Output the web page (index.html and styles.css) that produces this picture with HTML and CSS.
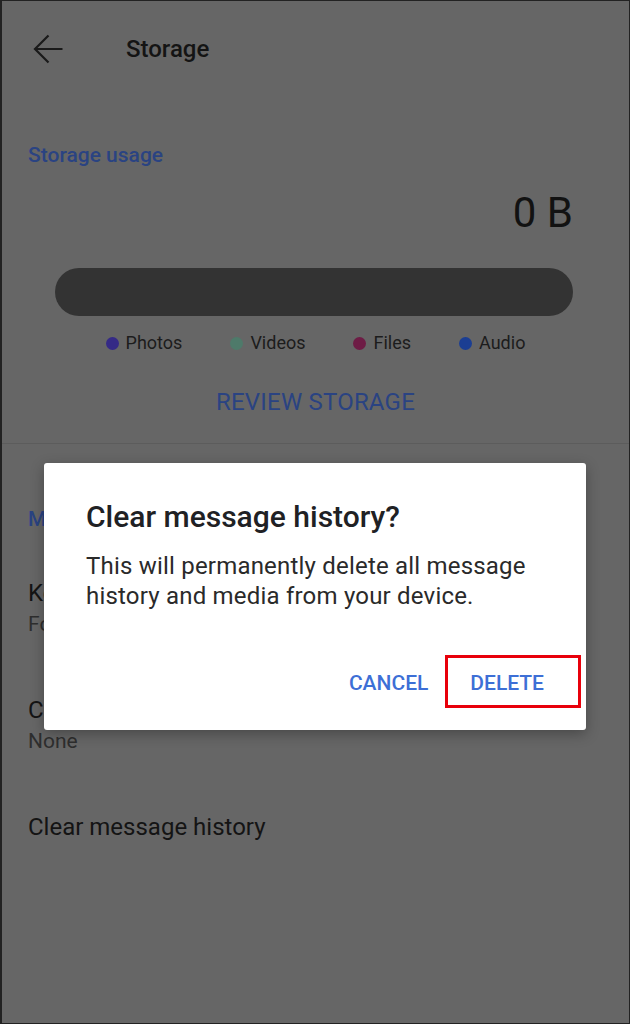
FILE: index.html
```html
<!DOCTYPE html>
<html lang="en">
<head>
    <meta charset="UTF-8">
    <meta name="viewport" content="width=device-width, initial-scale=1.0">
    <title>Storage</title>
    <link rel="stylesheet" href="styles.css">
</head>
<body>
    <div class="screen">
        <div class="toolbar">
            <svg class="back" width="30" height="30" viewBox="0 0 30 30">
                <path d="M29.5 15H2M15.5 1.5L2 15l13.5 13.5" fill="none" stroke="#1a1a1a" stroke-width="2.2"/>
            </svg>
            <div class="toolbar-title">Storage</div>
        </div>

        <div class="usage">
            <div class="section-title">Storage usage</div>
            <div class="total">0 B</div>
            <div class="bar"></div>
            <div class="legend">
                <div class="legend-item"><span class="dot photos"></span>Photos</div>
                <div class="legend-item"><span class="dot videos"></span>Videos</div>
                <div class="legend-item"><span class="dot files"></span>Files</div>
                <div class="legend-item"><span class="dot audio"></span>Audio</div>
            </div>
            <div class="review">REVIEW STORAGE</div>
        </div>

        <div class="messages">
            <div class="section-title">Messages</div>
            <div class="item">
                <div class="item-title">Keep messages</div>
                <div class="item-sub">Forever</div>
            </div>
            <div class="item">
                <div class="item-title">Conversation length limit</div>
                <div class="item-sub">None</div>
            </div>
            <div class="item">
                <div class="item-title">Clear message history</div>
            </div>
        </div>

        <div class="dialog">
            <div class="dialog-title">Clear message history?</div>
            <div class="dialog-text">This will permanently delete all message history and media from your device.</div>
            <div class="dialog-actions">
                <div class="btn">CANCEL</div>
                <div class="btn">DELETE</div>
            </div>
            <div class="highlight"></div>
        </div>
    </div>
</body>
</html>
```

FILE: styles.css
```css
body {
    margin: 0;
    padding: 0;
    font-family: Roboto, 'Noto Sans', sans-serif;
    background-color: #666666;
}

.screen {
    position: relative;
    box-sizing: border-box;
    width: 630px;
    height: 1024px;
    border: 1px solid #222222;
    border-left-width: 2px;
    overflow: hidden;
}

.toolbar {
    height: 95px;
    display: flex;
    align-items: center;
    padding-left: 31px;
}

.back {
    display: block;
}

.toolbar-title {
    margin-left: 63px;
    font-size: 24px;
    font-weight: 500;
    color: #141414;
}

.usage {
    padding: 0 26px;
    border-bottom: 1px solid #5c5c5c;
}

.section-title {
    font-size: 21px;
    line-height: 26px;
    font-weight: 500;
    color: #2a4382;
}

.usage .section-title {
    margin-top: 46px;
}

.total {
    margin-top: 20px;
    text-align: right;
    padding-right: 30px;
    font-size: 42px;
    line-height: 50px;
    color: #121212;
}

.bar {
    margin: 30px 30px 0 27px;
    height: 48px;
    border-radius: 24px;
    background-color: #333333;
}

.legend {
    display: flex;
    justify-content: center;
    gap: 48px;
    margin-top: 15px;
    font-size: 18px;
    line-height: 24px;
    color: #1c1c1c;
}

.legend-item {
    display: flex;
    align-items: center;
}

.dot {
    width: 13px;
    height: 13px;
    border-radius: 50%;
    margin-right: 7px;
}

.dot.photos { background-color: #352a86; }
.dot.videos { background-color: #4e7a6a; }
.dot.files { background-color: #6e1c45; }
.dot.audio { background-color: #1b3e93; }

.review {
    margin-top: 32px;
    padding-bottom: 26px;
    text-align: center;
    font-size: 24px;
    line-height: 30px;
    letter-spacing: 0.2px;
    color: #2a4382;
}

.messages {
    padding: 0 26px;
}

.messages .section-title {
    margin-top: 62px;
    margin-bottom: 17px;
}

.item {
    padding: 29px 0;
}

.item-title {
    font-size: 24px;
    line-height: 30px;
    color: #141414;
}

.item-sub {
    padding-top: 3px;
    font-size: 21px;
    line-height: 26px;
    color: #2e2e2e;
}

.dialog {
    position: absolute;
    left: 42px;
    top: 462px;
    width: 542px;
    box-sizing: border-box;
    padding: 35px 0 33px 42px;
    background-color: #ffffff;
    border-radius: 3px;
    box-shadow: 0 4px 14px rgba(0, 0, 0, 0.3);
}

.dialog-title {
    font-size: 30px;
    line-height: 38px;
    font-weight: 500;
    color: #202124;
}

.dialog-text {
    margin-top: 15px;
    padding-right: 40px;
    font-size: 24px;
    line-height: 30px;
    letter-spacing: 0.2px;
    color: #2a2a2a;
}

.dialog-actions {
    display: flex;
    justify-content: flex-end;
    margin-top: 58px;
    padding-right: 21px;
}

.btn {
    padding: 0 21px;
    font-size: 21px;
    line-height: 28px;
    font-weight: 500;
    color: #3d6fd6;
}

.highlight {
    position: absolute;
    left: 401px;
    top: 192px;
    width: 136px;
    height: 53px;
    box-sizing: border-box;
    border: 3px solid #e8000b;
}
```
